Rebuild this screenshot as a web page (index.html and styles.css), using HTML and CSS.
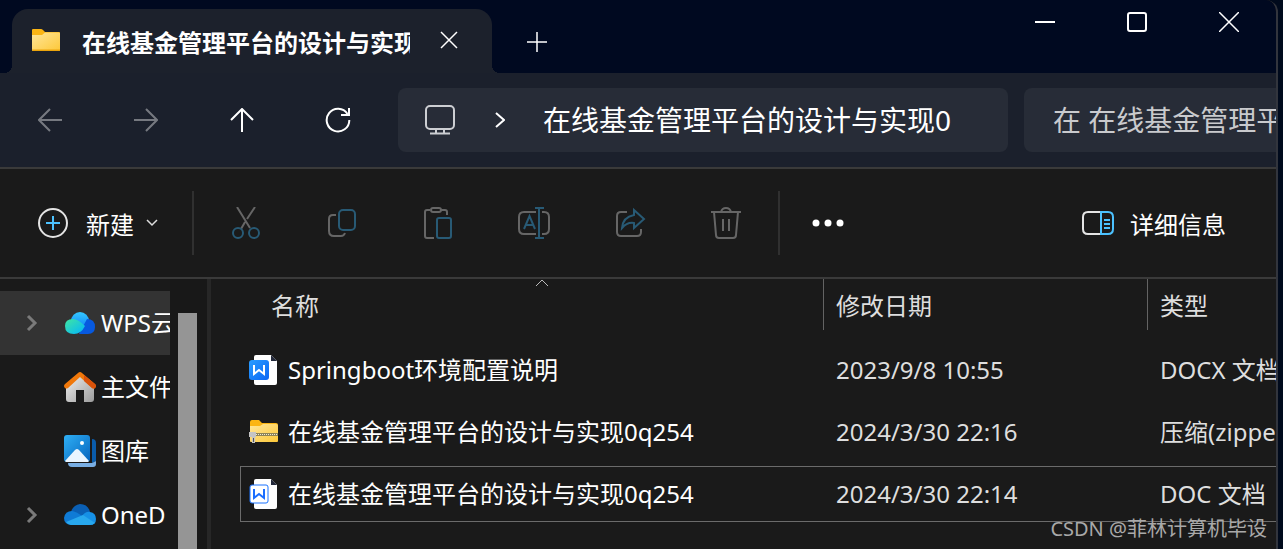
FILE: index.html
```
<!DOCTYPE html>
<html lang="zh-CN">
  <head>
    <meta charset="UTF-8" />
    <meta name="viewport" content="width=device-width, initial-scale=1.0" />
    <title>在线基金管理平台的设计与实现0</title>
    <link rel="stylesheet" href="styles.css">
  </head>
  <body>
    <div class="window">
      <header class="titlebar">
        <div class="tab">
          <svg class="tab-icon" width="28" height="22" viewBox="0 0 28 22">
            <defs>
              <linearGradient id="fold" x1="0" y1="0" x2="1" y2="1">
                <stop offset="0" stop-color="#ffe69a" />
                <stop offset="1" stop-color="#fdc838" />
              </linearGradient>
            </defs>
            <path d="M0 1q0-1 1-1h8q1 0 2 1l2 2h14q1 0 1 1v6H0z" fill="#fbb514" />
            <path d="M0 6h10l3-2.500h14q1 0 1 1V21q0 1-1 1H1q-1 0-1-1z" fill="url(#fold)" />
            <path d="M0 20.500h28V21q0 1-1 1H1q-1 0-1-1z" fill="#eba40c" />
          </svg>
          <span class="tab-title">在线基金管理平台的设计与实现</span>
          <button class="tab-close" aria-label="关闭标签页">
            <svg width="18" height="18" viewBox="0 0 18 18"><path d="M1 1l16 16M17 1L1 17" /></svg>
          </button>
        </div>
        <button class="tab-add" aria-label="新标签页">
          <svg width="20" height="20" viewBox="0 0 20 20"><path d="M10 0v20M0 10h20" /></svg>
        </button>
        <div class="controls">
          <button aria-label="最小化"><svg width="20" height="20" viewBox="0 0 20 20"><path class="thick" d="M0 10h20" /></svg></button>
          <button aria-label="最大化"><svg width="20" height="20" viewBox="0 0 20 20"><rect class="thick" x="1" y="1" width="18" height="18" rx="2" /></svg></button>
          <button aria-label="关闭"><svg width="20" height="20" viewBox="0 0 20 20"><path d="M0 0l20 20M20 0L0 20" /></svg></button>
        </div>
      </header>

      <nav class="navbar">
        <button aria-label="后退" disabled><svg width="24" height="24" viewBox="0 0 24 24"><path d="M24 12H1M12 1L1 12l11 11" /></svg></button>
        <button aria-label="前进" disabled><svg width="24" height="24" viewBox="0 0 24 24"><path d="M0 12h23M12 1l11 11-11 11" /></svg></button>
        <button aria-label="向上"><svg width="24" height="24" viewBox="0 0 24 24"><path d="M12 24V1M1 12L12 1l11 11" /></svg></button>
        <button aria-label="刷新"><svg width="26" height="26" viewBox="0 0 26 26"><path d="M22.500 7A11.300 11.300 0 1 0 24.300 13M24 1v7h-8" /></svg></button>
        <div class="address">
          <button class="pc" aria-label="此电脑">
            <svg width="30" height="30" viewBox="0 0 30 30"><rect x="1" y="1" width="28" height="23" rx="4" /><path d="M11 24v4M19 24v4M5 28.500h20" /></svg>
          </button>
          <button class="crumb-arrow" aria-label="展开">
            <svg width="10" height="16" viewBox="0 0 10 16"><path d="M1 1l8 7-8 7" /></svg>
          </button>
          <button class="crumb">在线基金管理平台的设计与实现0</button>
        </div>
        <input class="search" type="text" aria-label="搜索" placeholder="在 在线基金管理平">
      </nav>

      <div class="toolbar">
        <button class="new">
          <svg width="30" height="30" viewBox="0 0 30 30"><circle cx="15" cy="15" r="14" stroke="#e4e4e4" /><path d="M15 8v14M8 15h14" stroke="#4cc2ff" /></svg>
          <span>新建</span>
          <svg width="12" height="8" viewBox="0 0 12 8"><path class="thin" d="M1 1l5 5 5-5" stroke="#ddd" /></svg>
        </button>
        <span class="sep"></span>
        <div class="tools">
          <button aria-label="剪切" disabled>
            <svg width="32" height="32" viewBox="0 0 32 32"><path d="M7 0l13 21M25 0l-8 12M15 15l-4 7" /><g class="blue"><circle cx="8" cy="26" r="5" /><circle cx="24" cy="26" r="5" /></g></svg>
          </button>
          <button aria-label="复制" disabled>
            <svg width="32" height="32" viewBox="0 0 32 32"><path d="M10 8H7q-4 0-4 4v12q0 5 5 5h7q3 0 4-3" /><rect class="blue" x="13" y="3" width="16" height="20" rx="4" /></svg>
          </button>
          <button aria-label="粘贴" disabled>
            <svg width="32" height="32" viewBox="0 0 32 32"><path d="M8 3H5Q3 3 3 5v24q0 2 2 2h7M18 3h5q2 0 2 2v3" /><rect x="9" y="1" width="10" height="4" rx="2" /><rect class="blue" x="15" y="11" width="14" height="20" rx="2" /></svg>
          </button>
          <button aria-label="重命名" disabled>
            <svg width="32" height="32" viewBox="0 0 32 32"><path d="M18 5H6Q1 5 1 10v12q0 5 5 5h12M24 5h2q5 0 5 5v12q0 5-5 5h-2" /><path class="blue" d="M21 1v30M17 1h9M17 31h9M6 22L11.500 9 17 22M8 18h7" /></svg>
          </button>
          <button aria-label="共享" disabled>
            <svg width="32" height="32" viewBox="0 0 32 32"><path d="M13 5H7Q3 5 3 9v16q0 4 4 4h16q4 0 4-4v-3" /><path class="blue" d="M20 3l10 9-10 9v-5q-7-1-12 5 1-11 12-13z" /></svg>
          </button>
          <button aria-label="删除" disabled>
            <svg width="32" height="32" viewBox="0 0 32 32"><path d="M1 5h30M11 5q1-4 5-4t5 4M4 5l2 23q0 3 3 3h14q3 0 3-3l2-23M13 12v12M19 12v12" /></svg>
          </button>
        </div>
        <span class="sep"></span>
        <button class="more" aria-label="更多">
          <svg width="32" height="8" viewBox="0 0 32 8"><g fill="#fff" stroke="none"><circle cx="4" cy="4" r="3.500" /><circle cx="16" cy="4" r="3.500" /><circle cx="28" cy="4" r="3.500" /></g></svg>
        </button>
        <button class="details">
          <svg width="32" height="24" viewBox="0 0 32 24"><path d="M19 1H6Q1 1 1 6v12q0 5 5 5h13" stroke="#e4e4e4" /><path d="M19 1h7q5 0 5 5v12q0 5-5 5h-7zM22 9h6M22 13h6M22 17h6" stroke="#4cc2ff" /></svg>
          <span>详细信息</span>
        </button>
      </div>

      <div class="content">
        <aside class="sidebar">
          <ul class="tree">
            <li>
              <a class="active" href="#">
                <svg class="arrow" width="12" height="18" viewBox="0 0 12 18"><path d="M2 2l7 7-7 7" /></svg>
                <svg width="32" height="24" viewBox="0 0 32 24">
                  <defs>
                    <linearGradient id="wa" x1="0" y1="0" x2="1" y2="1"><stop offset="0" stop-color="#41e6a0" /><stop offset="1" stop-color="#00b4ff" /></linearGradient>
                    <linearGradient id="wb" x1="0" y1="0" x2="0" y2="1"><stop offset="0" stop-color="#35c8ff" /><stop offset="1" stop-color="#0a7df5" /></linearGradient>
                  </defs>
                  <circle cx="16" cy="10" r="9" fill="url(#wb)" />
                  <path d="M15 23l8-15q8 0 8 8 0 7-7 7z" fill="#0759df" />
                  <path d="M10 23Q1 23 1 15q0-7 8-7 5 0 12 7-4 8-11 8z" fill="url(#wa)" />
                </svg>
                <span>WPS云</span>
              </a>
            </li>
            <li>
              <a href="#">
                <span class="arrow"></span>
                <svg width="32" height="30" viewBox="0 0 32 30">
                  <defs><linearGradient id="home" x1="0" y1="0" x2="1" y2="1"><stop offset="0" stop-color="#f2f2f2" /><stop offset="1" stop-color="#9c9c9c" /></linearGradient></defs>
                  <path d="M2 14L16 2l14 12v13q0 3-3 3h-7V18h-8v12H5q-3 0-3-3z" fill="url(#home)" />
                  <path d="M1 16q-2-2 0-4L14 1q2-2 4 0l13 11q2 2 0 4-1 1-3 0L16 5 4 16q-2 1-3 0z" fill="#f0780a" />
                  <path d="M20 3l11 9q2 2 0 4-1 1-3 0l-8-7z" fill="#d9520a" />
                </svg>
                <span>主文件</span>
              </a>
            </li>
            <li>
              <a href="#">
                <span class="arrow"></span>
                <svg width="32" height="32" viewBox="0 0 32 32">
                  <defs><linearGradient id="pic" x1="0" y1="0" x2="1" y2="1"><stop offset="0" stop-color="#2fb0f5" /><stop offset="1" stop-color="#0563bd" /></linearGradient></defs>
                  <path d="M28 4q4 0 4 4v18l-4 2z" fill="#0a5cab" />
                  <path d="M4 28h24l4-2v3q0 3-3 3H8q-4 0-4-4z" fill="#78aee4" />
                  <rect width="26" height="27" rx="3" fill="url(#pic)" />
                  <path d="M1 26l10-11q2-2 4 0l10 11-1 1H2z" fill="#eaf5ff" />
                  <circle cx="18" cy="8" r="2" fill="#fff" />
                </svg>
                <span>图库</span>
              </a>
            </li>
            <li>
              <a href="#">
                <svg class="arrow" width="12" height="18" viewBox="0 0 12 18"><path d="M2 2l7 7-7 7" /></svg>
                <svg width="32" height="22" viewBox="0 0 32 22">
                  <path d="M7 8q2-7 9-8 8 0 10 8l-8 6z" fill="#0a5fb4" />
                  <path d="M7 21q-7-1-7-7 1-7 8-7 3 0 12 6l-4 8z" fill="#0f7bd6" />
                  <path d="M18 12q4-5 8-4 6 1 6 7 0 6-6 6h-8z" fill="#1690e6" />
                  <path d="M2 18l17-7 12 8q-2 2-6 2H7q-3 0-5-3z" fill="#28a8ee" />
                </svg>
                <span>OneD</span>
              </a>
            </li>
          </ul>
          <div class="scroll"><div class="thumb"></div></div>
        </aside>

        <main class="files">
          <table>
            <colgroup><col class="col-name"><col class="col-date"><col></colgroup>
            <thead>
              <tr>
                <th scope="col">
                  <button>名称</button>
                  <svg class="sort" width="14" height="8" viewBox="0 0 14 8"><path d="M1 7l6-6 6 6" /></svg>
                </th>
                <th scope="col"><button>修改日期</button></th>
                <th scope="col"><button>类型</button></th>
              </tr>
            </thead>
            <tbody>
              <tr>
                <td>
                  <div class="file">
                    <svg width="30" height="32" viewBox="0 0 30 32">
                      <defs><linearGradient id="doc" x1="0" y1="0" x2="1" y2="1"><stop offset="0" stop-color="#2a9dff" /><stop offset="1" stop-color="#0a66f5" /></linearGradient></defs>
                      <path d="M7 1h15l6 6v22q0 2-2 2H7q-2 0-2-2V3q0-2 2-2z" fill="#fff" />
                      <path d="M22 1l6 6h-6z" fill="#22283a" />
                      <rect y="6" width="20" height="20" rx="3" fill="url(#doc)" />
                      <path d="M5 11v9l5-4 5 4v-9" fill="none" stroke="#fff" stroke-width="2" />
                    </svg>
                    <span>Springboot环境配置说明</span>
                  </div>
                </td>
                <td>2023/9/8 10:55</td>
                <td>DOCX 文档</td>
              </tr>
              <tr>
                <td>
                  <div class="file">
                    <svg width="30" height="26" viewBox="0 0 30 26">
                      <path d="M1 3q0-2 2-2h7l3 3h14q2 0 2 2v6H1z" fill="#fbb514" />
                      <path d="M1 7h10l3-2h13q2 0 2 2v15q0 1-1 1H2q-1 0-1-1z" fill="url(#fold)" />
                      <path d="M1 14h28v3H1z" fill="#8d8358" />
                      <path d="M5 15.500h24" fill="none" stroke="#f2ead0" stroke-width="1" stroke-dasharray="1 1" />
                      <path d="M0 13h7v5H6v6H3v-6H0z" fill="#c4c4c4" />
                      <path d="M4 19h1v4H4z" fill="#555" />
                    </svg>
                    <span>在线基金管理平台的设计与实现0q254</span>
                  </div>
                </td>
                <td>2024/3/30 22:16</td>
                <td>压缩(zippe</td>
              </tr>
              <tr class="focused">
                <td>
                  <div class="file">
                    <svg width="30" height="32" viewBox="0 0 30 32">
                      <path d="M7 1h15l6 6v22q0 2-2 2H7q-2 0-2-2V3q0-2 2-2z" fill="#fff" />
                      <path d="M22 1l6 6h-6z" fill="#22283a" />
                      <rect x="1" y="7" width="18" height="18" rx="2" fill="#fff" stroke="#1a73ff" />
                      <path d="M5 11v9l5-4 5 4v-9" fill="none" stroke="#1a6dff" stroke-width="2" />
                    </svg>
                    <span>在线基金管理平台的设计与实现0q254</span>
                  </div>
                </td>
                <td>2024/3/30 22:14</td>
                <td>DOC 文档</td>
              </tr>
            </tbody>
          </table>
        </main>
      </div>
    </div>
    <div class="watermark">CSDN @菲林计算机毕设</div>
  </body>
</html>
```
FILE: styles.css
```
* {
  box-sizing: border-box;
}
body {
  margin: 0;
  height: 100vh;
  padding-right: 5px;
  overflow: hidden;
  background-color: #000a1c;
  color: #fff;
  font-family: "Noto Sans", "Noto Sans CJK SC", sans-serif;
  font-size: 24px;
  line-height: 32px;
}
button {
  display: flex;
  align-items: center;
  justify-content: center;
  flex-shrink: 0;
  margin: 0;
  padding: 0;
  border: 0;
  background: none;
  color: inherit;
  font: inherit;
  white-space: nowrap;
}
svg {
  display: block;
  flex-shrink: 0;
}
.window {
  display: flex;
  flex-direction: column;
  height: 100%;
  overflow: hidden;
  border-right: 2px solid #32353d;
  border-top-right-radius: 12px;
  background-color: #1a1a1a;
}

/* title bar */
.titlebar {
  display: flex;
  align-items: flex-start;
  flex-shrink: 0;
  padding: 0 1px 0 12px;
  background-color: #000920;
}
.titlebar svg,
.navbar svg {
  fill: none;
  stroke: #fff;
  stroke-width: 2;
}
.tab-close path,
.tab-add path,
.controls path {
  stroke-width: 1.5;
}
.titlebar .thick {
  stroke-width: 2;
}
.tab {
  position: relative;
  display: flex;
  align-items: center;
  width: 480px;
  height: 64px;
  margin-top: 9px;
  padding: 0 22px 2px 20px;
  border-radius: 16px 16px 0 0;
  background-color: #1c212c;
}
.tab::before,
.tab::after {
  content: "";
  position: absolute;
  bottom: 0;
  width: 8px;
  height: 8px;
}
.tab::before {
  right: 100%;
  background: radial-gradient(circle at 0 0, #000920 8px, #1c212c 8px);
}
.tab::after {
  left: 100%;
  background: radial-gradient(circle at 100% 0, #000920 8px, #1c212c 8px);
}
.titlebar .tab-icon {
  stroke: none;
}
.tab-title {
  flex: 1;
  margin: 6px 18px 0 22px;
  overflow: hidden;
  white-space: nowrap;
  font-weight: 700;
}
.tab-close {
  width: 42px;
  height: 40px;
}
.tab-add {
  width: 60px;
  height: 60px;
  margin: 12px 0 0 15px;
}
.controls {
  display: flex;
  margin-left: auto;
}
.controls button {
  width: 92px;
  height: 44px;
}

/* navigation */
.navbar {
  display: flex;
  align-items: center;
  flex-shrink: 0;
  height: 96px;
  padding-left: 2px;
  border-bottom: 2px solid #3a3a3a;
  background-color: #1b202c;
}
.navbar > button {
  width: 96px;
  height: 64px;
}
.navbar > button:disabled {
  opacity: 0.4;
}
.address {
  display: flex;
  align-items: center;
  flex: 1;
  min-width: 0;
  height: 64px;
  margin: 0 16px 0 12px;
  padding-left: 27px;
  overflow: hidden;
  border-radius: 8px;
  background-color: #272c37;
  font-size: 28px;
}
.address .pc svg {
  stroke: #ccced2;
}
.crumb-arrow {
  width: 10px;
  margin: 0 38px 0 40px;
}
.search {
  width: 252px;
  height: 64px;
  padding: 0 0 0 29px;
  border: 0;
  border-radius: 8px 0 0 8px;
  outline: 0;
  background-color: #272c37;
  color: #fff;
  font: inherit;
  font-size: 28px;
}
.search::placeholder {
  color: #c9cacd;
  opacity: 1;
}

/* commands */
.toolbar {
  display: flex;
  align-items: center;
  flex-shrink: 0;
  height: 110px;
  padding: 0 50px 0 38px;
  border-bottom: 2px solid #3a3a3a;
}
.toolbar svg {
  fill: none;
  stroke: #666;
  stroke-width: 2;
}
.toolbar .thin {
  stroke-width: 1.5;
}
.toolbar .blue {
  stroke: #285a75;
}
.new {
  margin-right: 34px;
}
.new span {
  margin: 4px 12px 0 18px;
}
.sep {
  width: 2px;
  height: 64px;
  background-color: #303030;
}
.tools {
  display: flex;
  padding: 0 4px;
}
.tools button {
  width: 96px;
  height: 64px;
}
.more {
  width: 96px;
  height: 64px;
}
.details {
  gap: 16px;
  margin-left: auto;
}
.details span {
  margin-top: 4px;
}

/* folder tree */
.content {
  display: flex;
  flex: 1;
  min-height: 0;
}
.sidebar {
  display: flex;
  flex-shrink: 0;
  width: 211px;
  border-right: 4px solid #272727;
  background-color: #181818;
}
.tree {
  width: 170px;
  margin: 0;
  padding: 12px 0 0;
  overflow: hidden;
  list-style: none;
  background-color: #1a1a1a;
}
.tree a {
  display: flex;
  align-items: center;
  height: 64px;
  padding-left: 26px;
  color: #fff;
  text-decoration: none;
  white-space: nowrap;
}
.tree .active {
  background-color: #333;
}
.tree .arrow {
  flex-shrink: 0;
  width: 12px;
  margin-right: 26px;
  fill: none;
  stroke: #7a7a7a;
  stroke-width: 3;
}
.tree svg + span {
  margin-left: 5px;
}
.scroll {
  width: 19px;
  margin-left: 8px;
  padding-top: 34px;
}
.thumb {
  height: 100%;
  background-color: #959595;
}

/* file list */
.files {
  flex: 1;
  min-width: 0;
  padding-left: 26px;
  overflow: hidden;
}
table {
  width: calc(100% + 16px);
  table-layout: fixed;
  border-collapse: collapse;
}
.col-name {
  width: 586px;
}
.col-date {
  width: 324px;
}
th {
  position: relative;
  height: 60px;
  padding: 0;
  vertical-align: top;
  font-weight: 400;
  color: #dedede;
}
th button {
  justify-content: flex-start;
  width: 100%;
  height: 51px;
  padding: 2px 0 0 12px;
  border-left: 1px solid #636363;
}
th:first-child button {
  padding-left: 34px;
  border-left: 0;
}
.sort {
  position: absolute;
  top: 0;
  left: 298px;
  fill: none;
  stroke: #bbb;
}
td {
  height: 62px;
  padding: 0 0 0 13px;
  overflow: hidden;
  white-space: nowrap;
  color: #dedede;
}
td:first-child {
  padding-left: 12px;
  color: #fff;
}
.file {
  display: flex;
  align-items: center;
  gap: 9px;
}
.focused {
  outline: 1px solid #6b6b6b;
  outline-offset: -4px;
}
.watermark {
  position: absolute;
  right: 16px;
  bottom: 4px;
  color: #a9a9a9;
  font-family: "Noto Sans", "Noto Sans CJK SC", sans-serif;
  font-size: 20px;
}
```
